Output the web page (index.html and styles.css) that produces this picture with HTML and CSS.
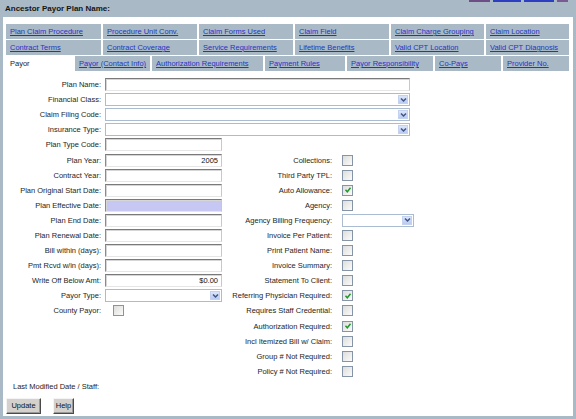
FILE: index.html
```html
<!DOCTYPE html>
<html>
<head>
<meta charset="utf-8">
<title>Ancestor Payor Plan</title>
<link rel="stylesheet" href="styles.css">
</head>
<body>
<div class="frame">
  <div class="header">
    <div class="strip"><span class="s s1"></span><span class="s s2"></span><span class="s s3"></span><span class="s s4"></span></div>
    <div class="title">Ancestor Payor Plan Name:</div>
  </div>
  <div class="panel">
    <div class="tabrow six">
      <a class="tab">Plan Claim Procedure</a>
      <a class="tab">Procedure Unit Conv.</a>
      <a class="tab">Claim Forms Used</a>
      <a class="tab">Claim Field</a>
      <a class="tab">Claim Charge Grouping</a>
      <a class="tab">Claim Location</a>
    </div>
    <div class="tabrow six">
      <a class="tab">Contract Terms</a>
      <a class="tab">Contract Coverage</a>
      <a class="tab">Service Requirements</a>
      <a class="tab">Lifetime Benefits</a>
      <a class="tab">Valid CPT Location</a>
      <a class="tab">Valid CPT Diagnosis</a>
    </div>
    <div class="tabrow seven">
      <span class="tab sel">Payor</span>
      <a class="tab">Payor (Contact Info)</a>
      <a class="tab">Authorization Requirements</a>
      <a class="tab">Payment Rules</a>
      <a class="tab">Payor Responsibility</a>
      <a class="tab">Co-Pays</a>
      <a class="tab">Provider No.</a>
    </div>

    <div class="form">
      <div class="lbl">Plan Name:</div>
      <div class="field wide"></div>

      <div class="lbl">Financial Class:</div>
      <div class="select wide"><span class="arrow"><svg width="7" height="6" viewBox="0 0 7 6"><polyline points="1,1.5 3.5,4 6,1.5" fill="none" stroke="#3f5585" stroke-width="1.5"/></svg></span></div>

      <div class="lbl">Claim Filing Code:</div>
      <div class="select wide"><span class="arrow"><svg width="7" height="6" viewBox="0 0 7 6"><polyline points="1,1.5 3.5,4 6,1.5" fill="none" stroke="#3f5585" stroke-width="1.5"/></svg></span></div>

      <div class="lbl">Insurance Type:</div>
      <div class="select wide"><span class="arrow"><svg width="7" height="6" viewBox="0 0 7 6"><polyline points="1,1.5 3.5,4 6,1.5" fill="none" stroke="#3f5585" stroke-width="1.5"/></svg></span></div>

      <div class="lbl">Plan Type Code:</div>
      <div class="field"></div>
      <div></div><div></div>

      <div class="lbl">Plan Year:</div>
      <div class="field">2005</div>
      <div class="lbl rlbl">Collections:</div>
      <div><span class="cb"></span></div>

      <div class="lbl">Contract Year:</div>
      <div class="field"></div>
      <div class="lbl rlbl">Third Party TPL:</div>
      <div><span class="cb"></span></div>

      <div class="lbl">Plan Original Start Date:</div>
      <div class="field"></div>
      <div class="lbl rlbl">Auto Allowance:</div>
      <div><span class="cb"><svg width="8" height="8" viewBox="0 0 8 8"><polyline points="1.5,3.8 3.3,5.8 6.5,1.8" fill="none" stroke="#1f9a2a" stroke-width="1.5"/></svg></span></div>

      <div class="lbl">Plan Effective Date:</div>
      <div class="field lav"></div>
      <div class="lbl rlbl">Agency:</div>
      <div><span class="cb"></span></div>

      <div class="lbl">Plan End Date:</div>
      <div class="field"></div>
      <div class="lbl rlbl">Agency Billing Frequency:</div>
      <div><div class="select small"><span class="arrow"><svg width="7" height="6" viewBox="0 0 7 6"><polyline points="1,1.5 3.5,4 6,1.5" fill="none" stroke="#3f5585" stroke-width="1.5"/></svg></span></div></div>

      <div class="lbl">Plan Renewal Date:</div>
      <div class="field"></div>
      <div class="lbl rlbl">Invoice Per Patient:</div>
      <div><span class="cb"></span></div>

      <div class="lbl">Bill within (days):</div>
      <div class="field"></div>
      <div class="lbl rlbl">Print Patient Name:</div>
      <div><span class="cb"></span></div>

      <div class="lbl">Pmt Rcvd w/in (days):</div>
      <div class="field"></div>
      <div class="lbl rlbl">Invoice Summary:</div>
      <div><span class="cb"></span></div>

      <div class="lbl">Write Off Below Amt:</div>
      <div class="field">$0.00</div>
      <div class="lbl rlbl">Statement To Client:</div>
      <div><span class="cb"></span></div>

      <div class="lbl">Payor Type:</div>
      <div class="select"><span class="arrow"><svg width="7" height="6" viewBox="0 0 7 6"><polyline points="1,1.5 3.5,4 6,1.5" fill="none" stroke="#3f5585" stroke-width="1.5"/></svg></span></div>
      <div class="lbl rlbl">Referring Physician Required:</div>
      <div><span class="cb"><svg width="8" height="8" viewBox="0 0 8 8"><polyline points="1.5,3.8 3.3,5.8 6.5,1.8" fill="none" stroke="#1f9a2a" stroke-width="1.5"/></svg></span></div>

      <div class="lbl">County Payor:</div>
      <div><span class="cb county"></span></div>
      <div class="lbl rlbl">Requires Staff Credential:</div>
      <div><span class="cb"></span></div>

      <div></div><div></div>
      <div class="lbl rlbl">Authorization Required:</div>
      <div><span class="cb"><svg width="8" height="8" viewBox="0 0 8 8"><polyline points="1.5,3.8 3.3,5.8 6.5,1.8" fill="none" stroke="#1f9a2a" stroke-width="1.5"/></svg></span></div>

      <div></div><div></div>
      <div class="lbl rlbl">Incl Itemized Bill w/ Claim:</div>
      <div><span class="cb"></span></div>

      <div></div><div></div>
      <div class="lbl rlbl">Group # Not Required:</div>
      <div><span class="cb"></span></div>

      <div></div><div></div>
      <div class="lbl rlbl">Policy # Not Required:</div>
      <div><span class="cb"></span></div>
    </div>

    <div class="modified">Last Modified Date / Staff:</div>
    <div class="buttons">
      <span class="btn update">Update</span>
      <span class="btn help">Help</span>
    </div>
  </div>
</div>
</body>
</html>
```
FILE: styles.css
```css
html, body {
  margin: 0;
  padding: 0;
}
body {
  background: #a9b9c5;
  font-family: "Liberation Sans", Arial, sans-serif;
  font-size: 7.5px;
  color: #1e1e1e;
}
.frame {
  width: 576px;
  height: 419px;
  display: flex;
  flex-direction: column;
}
.header {
  height: 17px;
  flex: none;
}
.strip {
  height: 2px;
  display: flex;
  justify-content: flex-end;
  gap: 3px;
  padding-right: 8px;
}
.s { display: block; height: 2px; }
.s1 { width: 21px; background: #6d4f86; }
.s2 { width: 28px; background: #2c3fc0; }
.s3 { width: 30px; background: #2c3fc0; }
.s4 { width: 11px; background: #7a5a92; }
.title {
  font-weight: bold;
  font-size: 8px;
  line-height: 14px;
  padding-left: 5px;
  color: #151515;
}
.panel {
  flex: none;
  background: #ffffff;
  margin: 0 3px 0 3px;
  height: 399px;
  box-sizing: border-box;
  padding: 7px 0 0 3px;
}
.tabrow {
  display: grid;
  column-gap: 2px;
  height: 15px;
  margin-bottom: 1px;
}
.six { grid-template-columns: 95px 94px 94px 94px 93px 83px; }
.seven { grid-template-columns: 67px 75px 111px 80px 86px 66px 66px; }
.tab {
  background: #a9b9c5;
  color: #2435c4;
  text-decoration: underline;
  line-height: 15px;
  padding-left: 4px;
  white-space: nowrap;
  overflow: hidden;
}
.tab.sel {
  background: #ffffff;
  color: #1a1a1a;
  text-decoration: none;
}
.form {
  margin-top: 6px;
  margin-left: -3px;
  display: grid;
  grid-template-columns: 102px 117px 116px 1fr;
  grid-auto-rows: 15.1px;
  align-items: center;
}
.lbl {
  text-align: right;
  padding-right: 4px;
  white-space: nowrap;
}
.rlbl { padding-right: 6px; }
.field {
  width: 117px;
  height: 13px;
  box-sizing: border-box;
  border-top: 1px solid #7a7a7a;
  border-left: 1px solid #8a8a8a;
  border-right: 1px solid #c8c8c8;
  border-bottom: 1px solid #e6e6e6;
  box-shadow: inset 1px 1px 0 #d6d6d6;
  background: #ffffff;
  line-height: 11px;
  text-align: right;
  padding-right: 3px;
  color: #111;
}
.wide {
  grid-column: 2 / span 3;
  width: 305px;
}
.lav { background: #c6c7f2; }
.select {
  width: 117px;
  height: 13px;
  box-sizing: border-box;
  border: 1px solid #a9bcd2;
  background: #ffffff;
  display: flex;
  justify-content: flex-end;
  padding: 1px;
}
.select.wide { width: 305px; }
.select.small { width: 72px; margin-left: 4px; }
.arrow {
  width: 10px;
  height: 9px;
  background: linear-gradient(#dbe5fb, #b9cbf3);
  border: 1px solid #c4d2ef;
  box-sizing: border-box;
  display: flex;
  align-items: center;
  justify-content: center;
}
.cb {
  display: flex;
  align-items: center;
  justify-content: center;
  width: 9px;
  height: 9px;
  margin-left: 4px;
  border: 1px solid #8595a7;
  background: linear-gradient(135deg, #dddddb, #fbfbfb);
}
.cb.county { margin-left: 8px; }
.modified {
  height: 15px;
  line-height: 15px;
  padding-left: 7px;
}
.buttons {
  display: flex;
  gap: 12px;
  margin-top: 4px;
  padding-left: 0;
}
.btn {
  height: 16px;
  box-sizing: border-box;
  line-height: 14px;
  text-align: center;
  background: #d4d1cc;
  border: 1px solid;
  border-color: #f4f4f4 #4a4a4a #4a4a4a #f4f4f4;
  box-shadow: inset -1px -1px 0 #9a9a9a;
  color: #111;
}
.update { width: 35px; }
.help { width: 21px; }
```
